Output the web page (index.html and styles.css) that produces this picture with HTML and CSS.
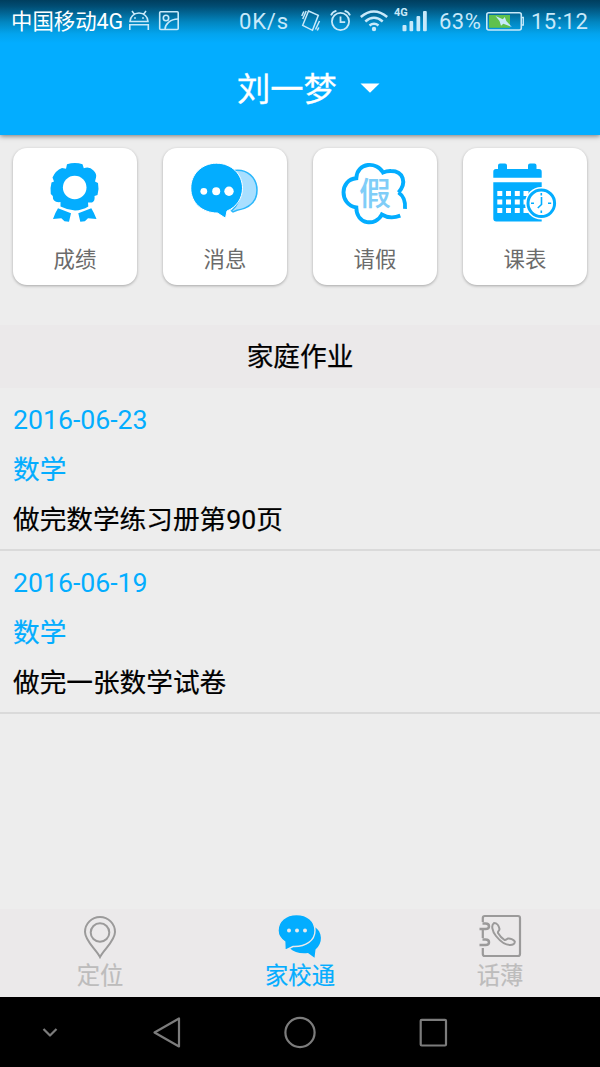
FILE: index.html
```html
<!DOCTYPE html>
<html lang="zh-CN">
<head>
<meta charset="utf-8">
<title>家校通</title>
<link rel="stylesheet" href="styles.css">
</head>
<body>
<div class="phone">
  <header class="header">
    <div class="status">
      <span class="carrier">中国移动4G</span>
      <svg width="22" height="22" viewBox="128 10 22 22" fill="none" stroke="currentColor" stroke-width="1.6"><path d="M130 21.500a9 8.500 0 0 1 18 0zM132 11l2.500 3.400M146 11l-2.500 3.400M129.800 30v-5.300h18.500V30"/><path d="M135 17.300v1.500M143 17.300v1.500" stroke-width="1.800"/></svg>
      <svg width="22" height="22" viewBox="158 10 22 22" fill="none" stroke="currentColor" stroke-width="1.600"><rect x="159.700" y="11.700" width="18.500" height="17.800" rx="1"/><circle cx="166" cy="18" r="2.700"/><path d="M165 29.500c0-5 5-10.500 13-10.500"/></svg>
      <span class="speed">0K/s</span>
      <svg width="22" height="22" viewBox="300 10 22 22" fill="none" stroke="currentColor" stroke-width="1.500"><path d="M308.500 11l9.800 4.300-5.800 15-9.800-5zM303.800 11.500l-2 4.500M306.200 11l-3.500 8M319.500 21l-4 8.500M318.800 27.500l-1.500 3"/></svg>
      <svg width="22" height="22" viewBox="330 10 22 22" fill="none" stroke="currentColor" stroke-width="1.800"><circle cx="340.500" cy="21.500" r="8.600"/><path d="M340.500 16.500v5.700h4.700M331 15.300q1.500-3.700 5.400-4.500M350 15.300q-1.500-3.700-5.400-4.500"/></svg>
      <svg width="30" height="22" viewBox="359 10 30 22" fill="none" stroke="currentColor" stroke-width="2.500"><path d="M360.800 17q13-11 26.400 0M365.300 21.500q8.700-7.500 17.400 0M369.500 25.500q4.500-3.500 9 0"/><circle cx="374" cy="29" r="2.200" fill="currentColor" stroke="none"/></svg>
      <div class="signal"><span class="signal-type">4G</span><svg width="26" height="22" viewBox="401 10 26 22" fill="currentColor"><rect x="401.500" y="25" width="4" height="6.200" rx="1"/><rect x="408.500" y="21" width="3.700" height="10.200" rx="1"/><rect x="415.500" y="16" width="3.700" height="15.200" rx="1"/><rect x="422" y="11" width="3.800" height="20.200" rx="1"/></svg></div>
      <span class="percent">63%</span>
      <svg width="39" height="22" viewBox="485 10 39 22"><rect x="486.800" y="12.800" width="34.500" height="17.200" rx="2" fill="none" stroke="currentColor" stroke-width="1.600"/><path d="M489 15h21v12.800h-21z" fill="#5fc14d"/><path d="M521.500 17.500h1.800v7.500h-1.800" fill="none" stroke="currentColor" stroke-width="1.300"/><path d="M495.500 16l7.300 3.200 2-2.200 1.500 4 5.500 6-8.500-3.200-2.300 2-1.500-4.700z" fill="currentColor"/></svg>
      <span class="time">15:12</span>
    </div>
    <div class="title"><span>刘一梦</span><svg width="20" height="10" viewBox="0 0 20 10"><path d="M.5.500h19L10 9.700z" fill="#fff"/></svg></div>
  </header>

  <nav class="shortcuts">
    <a class="card">
      <svg width="68" height="68" viewBox="41 160 68 68" fill="#03adff"><path d="M67 164.200q8-2.500 15.500 0l1.300 4q5.500-2.400 9.700 2.300 3.500 3.500 2.500 7l-1 4 3 1.500q1.300 6-.5 12l-3 1q.800 5-2.500 6.500h-4l.3 4q-6 3.700-13.300 4-7.500-.5-14.500-4v-4.500q-8 1-7.700-6l-2-2q-1-5.500.700-11.500l2.500-1-1.500-4q3-7 9.500-9.500l4 .7z"/><circle cx="74.700" cy="187.500" r="11.800" fill="#fff"/><path d="M58 208.300l13 5-2 8.500-4.500-.6-3.200-2.900-8.300.7q2-6 5-10.700zM91.300 208.300l-13 5 2 8.500 4.500-.6 3.200-2.900 8.500.7q-2.300-6-5.200-10.700z"/></svg>
      <span>成绩</span>
    </a>
    <a class="card">
      <svg width="68" height="68" viewBox="191 160 68 68"><path d="M234 170.500c13-2 23 7 23 19.500 0 13-10 18.500-20 20.300l-4 1.700-1.500-1.200c5-4 9-12 9.500-21s-2-15-7-19.300z" fill="#a9dfff" stroke="#2bb7fb" stroke-width="1.500"/><path d="M216.500 163.200c15 0 26 11 26 25 0 10-6 19-15.500 22.800l-1.500 7.200-8-5.200c-15 0-26.700-10-26.700-24.800 0-14 11-25 25.700-25z" fill="#03adff" stroke="#fff" stroke-width="1"/><g fill="#fff"><circle cx="203.800" cy="191.300" r="3.400"/><circle cx="216.200" cy="191.300" r="4"/><circle cx="229" cy="191.300" r="4.700"/></g></svg>
      <span>消息</span>
    </a>
    <a class="card">
      <svg width="68" height="68" viewBox="341 160 68 68"><path d="M398.500 192.500C407 183 403.500 171 391 171Q387 170.800 383 172.500C377.500 161.500 357 161.500 356.300 178.300C339.500 179.500 339 204.500 356.300 207.500C356.500 225 376 226.500 381.800 214.500Q390 219.500 400.300 215.700M398.500 192.500Q406 197.500 405 208.800" fill="none" stroke="#03adff" stroke-width="3.900"/><text class="leave-glyph" x="359" y="205">假</text></svg>
      <span>请假</span>
    </a>
    <a class="card">
      <svg width="68" height="68" viewBox="491 160 68 68"><g fill="#03adff"><path d="M493.300 177.700v-6q0-2.700 2.700-2.700h2v-3.500q0-2 2-2h5q2 0 2 2v3.500h21v-3.500q0-2 2-2h4.500q2 0 2 2v3.500h2.500q2.700 0 2.700 2.700v6zM493.300 182.300h48.400v39.300h-45.400q-3 0-3-3z"/></g><path d="M497.300 191h5v5h-5zM506 191h5v5h-5zM514.800 191h5v5h-5zM523.500 191h5v5h-5zM497.300 199.500h5v5h-5zM506 199.500h5v5h-5zM514.800 199.500h5v5h-5zM523.500 199.500h5v5h-5zM497.300 208h5v5h-5zM506 208h5v5h-5zM514.800 208h5v5h-5zM523.500 208h5v5h-5z" fill="#fff"/><circle cx="541.300" cy="203.300" r="16.300" fill="#fff"/><circle cx="541.300" cy="203.300" r="13.300" fill="none" stroke="#03adff" stroke-width="3"/><path d="M541.500 197v7.500l-3.700 3.500M531 203.300h3M548 203.300h3.200M541.300 193v2.500M541.300 210.500v2.500" fill="none" stroke="#03adff" stroke-width="1.600"/></svg>
      <span>课表</span>
    </a>
  </nav>

  <main class="homework">
    <h2 class="section-title">家庭作业</h2>
    <article class="entry">
      <p class="date">2016-06-23</p>
      <p class="subject">数学</p>
      <p class="task">做完数学练习册第90页</p>
    </article>
    <article class="entry">
      <p class="date">2016-06-19</p>
      <p class="subject">数学</p>
      <p class="task">做完一张数学试卷</p>
    </article>
  </main>

  <nav class="tabs">
    <a class="tab">
      <svg width="46" height="46" viewBox="77 913 46 46" fill="none" stroke="#9b9a9a" stroke-width="2"><path d="M100 957c-4-8-15-16-15-25a15 15 0 0 1 30 0c0 9-11 17-15 25z"/><circle cx="100" cy="932.500" r="9.300"/></svg>
      <span>定位</span>
    </a>
    <a class="tab active">
      <svg width="46" height="46" viewBox="277 913 46 46"><path d="M314 926.500c9 5 9 17 1.500 23l-1 8.300-6.500-4.800c-8 1-14-1-18-4.500z" fill="#03adff"/><path d="M296.500 914.500c11 0 18.500 6.500 18.500 16 0 10-9 16.500-22 16l-8 3.800-.3-8.500c-4.500-3-6.700-7-6.700-11.300 0-9.500 8-16 18.500-16z" fill="#03adff" stroke="#ebe9ea" stroke-width="1.400"/><g fill="#ebe9ea"><circle cx="289" cy="930.500" r="2"/><circle cx="297" cy="930.500" r="2"/><circle cx="305" cy="930.500" r="2"/></g></svg>
      <span>家校通</span>
    </a>
    <a class="tab">
      <svg width="46" height="46" viewBox="477 913 46 46" fill="none" stroke="#9b9a9a" stroke-width="2.200"><path d="M482.800 922v-4q0-2 2-2h33.200q2 0 2 2v36q0 2-2 2h-33.200q-2 0-2-2v-6M482.800 930v8"/><path d="M479.500 929h6q3.500 0 3.500-2.800t-3.500-2.800h-3M479.500 945h6q3.500 0 3.500-2.800t-3.500-2.800h-3" stroke-width="2.500"/><path d="M494 923c-3 2-2 8 2 13s9 9 14 9c3 0 5-1 4.800-3.500-1-2-5-3.500-6.800-3-1.500.5-1.800 2-3.500 1.500-3-2-5-4.500-6.500-7-.5-2 1.500-2 1.500-4-.5-3-2.500-6-5.500-6z" stroke-width="2"/></svg>
      <span>话薄</span>
    </a>
  </nav>

  <footer class="system-nav">
    <svg width="600" height="70" viewBox="0 997 600 70" fill="none" stroke="#7c7c7c" stroke-width="2.200" stroke-linejoin="round"><path d="M43.500 1029l6.500 6.500 6.500-6.500"/><path d="M154.500 1032.500l24.500-14v28z"/><circle cx="300" cy="1032.500" r="14.600"/><rect x="420.700" y="1019.800" width="25.300" height="25.700" rx="1"/></svg>
  </footer>
</div>
</body>
</html>
```

FILE: styles.css
```css
* { box-sizing: border-box; }
body {
  margin: 0;
  background: #ededed;
  font-family: Roboto, "Noto Sans CJK SC", sans-serif;
}
h2, p { margin: 0; font-weight: 400; }
svg { display: block; flex: none; }

.phone {
  display: flex;
  flex-direction: column;
  width: 600px;
  height: 1067px;
  overflow: hidden;
}

.header {
  flex: none;
  height: 135px;
  color: #fff;
  background: linear-gradient(#003e5e 0, #014c72 6px, #0286c0 22px, #03a4ee 34px, #03adff 43px);
  box-shadow: 0 1px 5px rgba(0, 0, 0, .5);
}
.status {
  display: grid;
  grid-template-columns: 117px 30px 81px 61px 30px 29px 35px 45px 46px 46px 60px;
  align-items: center;
  height: 42px;
  padding-left: 11px;
  color: #c8e9fa;
  font-size: 22px;
  line-height: 40px;
  white-space: nowrap;
}
.status svg { margin-bottom: 1px; }
.carrier {
  padding-top: 2px;
  color: #fff;
  font-size: 21.400px;
}
.speed, .percent, .time { padding-top: 2px; }
.speed { letter-spacing: .8px; }
.percent { letter-spacing: .5px; }
.time { letter-spacing: .5px; }
.signal { display: flex; align-items: flex-start; }
.signal-type {
  width: 8px;
  font-size: 11px;
  font-weight: 700;
  line-height: 6px;
}
.title {
  display: flex;
  align-items: center;
  height: 92px;
  padding-left: 237px;
  gap: 23px;
  font-size: 33.300px;
  -webkit-text-stroke: .3px;
}
.title span { margin-top: -4px; }

.shortcuts {
  display: grid;
  grid-template-columns: repeat(4, 124px);
  gap: 26px;
  flex: none;
  height: 190px;
  padding: 13px 13px 0;
}
.card {
  display: flex;
  flex-direction: column;
  align-items: center;
  height: 137px;
  padding: 12px 0 0;
  border-radius: 14px;
  background: #fff;
  box-shadow: 0 1px 3px rgba(0, 0, 0, .3);
  color: #6b6b6b;
  font-size: 21.400px;
  line-height: 30px;
}
.card span { margin-top: 17px; }
.leave-glyph {
  fill: #7fcdf8;
  font-size: 32px;
  font-weight: 500;
}

.homework { flex: none; height: 584px; }
.section-title {
  height: 63px;
  background: #ebe9ea;
  color: #000;
  font-size: 26.670px;
  line-height: 65px;
  text-align: center;
  -webkit-text-stroke: .25px;
}
.entry {
  height: 163px;
  padding: 8px 13px 0;
  border-bottom: 2px solid #dadada;
  color: #000;
  font-size: 26.670px;
  line-height: 49.500px;
}
.date, .subject { color: #03adff; }
.subject, .task { -webkit-text-stroke: .2px; }
.task { padding-top: 1px; }

.tabs {
  display: grid;
  grid-template-columns: repeat(3, 200px);
  flex: none;
  height: 81px;
  margin-bottom: 7px;
  background: #ebe9ea;
}
.tab {
  display: flex;
  flex-direction: column;
  align-items: center;
  padding-top: 4px;
  color: #bdbcbc;
  font-size: 23.300px;
  line-height: 34px;
  -webkit-text-stroke: .2px;
}
.active { color: #03adff; }

.system-nav {
  flex: none;
  height: 70px;
  background: #000;
}
```
